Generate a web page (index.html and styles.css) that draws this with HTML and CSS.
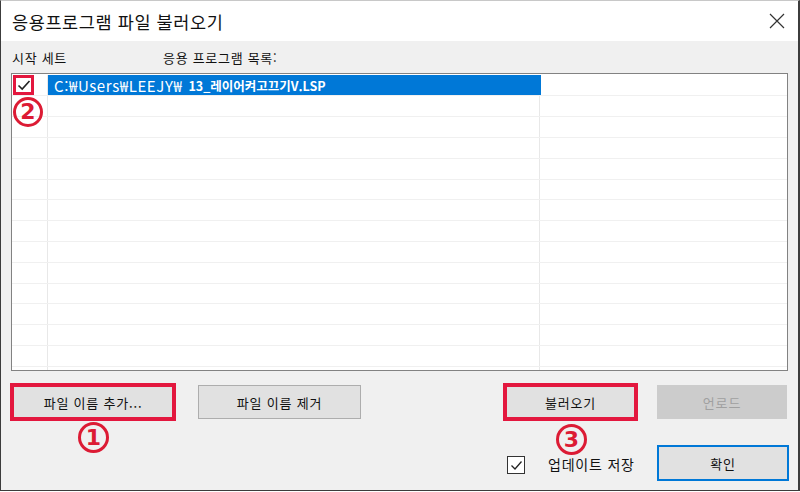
FILE: index.html
```html
<!DOCTYPE html>
<html lang="ko">
<head>
<meta charset="utf-8">
<title>응용프로그램 파일 불러오기</title>
<link rel="stylesheet" href="styles.css">
</head>
<body>
<div class="window">
  <div class="titlebar">
    <span class="title">응용프로그램 파일 불러오기</span>
    <svg class="close" width="16" height="16" viewBox="0 0 16 16"><path d="M1 1 L15 15 M15 1 L1 15" stroke="#333" stroke-width="1.2" fill="none"/></svg>
  </div>
  <div class="content">
    <div class="labels">
      <span class="lab1">시작 세트</span>
      <span class="lab2">응용 프로그램 목록:</span>
    </div>
    <div class="list">
      <div class="row">
        <div class="c1"><span class="chk marked"><svg width="14" height="14" viewBox="0 0 14 14"><path d="M1.5 7.5 L5.2 11 L12.5 3" stroke="#222" stroke-width="1.6" fill="none"/></svg></span></div>
        <div class="c2 sel"><span class="path">C:₩Users₩LEEJY₩</span><span class="fname">13_레이어켜고끄기V.LSP</span></div>
        <div class="c3"></div>
      </div>
      <div class="row"><div class="c1"></div><div class="c2"></div><div class="c3"></div></div>
      <div class="row"><div class="c1"></div><div class="c2"></div><div class="c3"></div></div>
      <div class="row"><div class="c1"></div><div class="c2"></div><div class="c3"></div></div>
      <div class="row"><div class="c1"></div><div class="c2"></div><div class="c3"></div></div>
      <div class="row"><div class="c1"></div><div class="c2"></div><div class="c3"></div></div>
      <div class="row"><div class="c1"></div><div class="c2"></div><div class="c3"></div></div>
      <div class="row"><div class="c1"></div><div class="c2"></div><div class="c3"></div></div>
      <div class="row"><div class="c1"></div><div class="c2"></div><div class="c3"></div></div>
      <div class="row"><div class="c1"></div><div class="c2"></div><div class="c3"></div></div>
      <div class="row"><div class="c1"></div><div class="c2"></div><div class="c3"></div></div>
      <div class="row"><div class="c1"></div><div class="c2"></div><div class="c3"></div></div>
      <div class="row"><div class="c1"></div><div class="c2"></div><div class="c3"></div></div>
      <div class="row"><div class="c1"></div><div class="c2"></div><div class="c3"></div></div>
      <div class="row last"><div class="c1"></div><div class="c2"></div><div class="c3"></div></div>
    </div>
    <div class="btnrow">
      <button class="btn marked b-add">파일 이름 추가...</button>
      <button class="btn b-remove">파일 이름 제거</button>
      <button class="btn marked b-load">불러오기</button>
      <button class="btn disabled b-unload">언로드</button>
    </div>
    <div class="bottomrow">
      <span class="chk2"><svg width="15" height="15" viewBox="0 0 15 15"><path d="M2.5 7.5 L6 11 L12.5 3.5" stroke="#222" stroke-width="1.3" fill="none"/></svg></span>
      <span class="chklabel">업데이트 저장</span>
      <button class="btn default b-ok">확인</button>
    </div>
  </div>
  <span class="num n2">2</span>
  <span class="num n1">1</span>
  <span class="num n3">3</span>
</div>
</body>
</html>
```
FILE: styles.css
```css
html, body {
  margin: 0;
  padding: 0;
  background: #ffffff;
}
body {
  font-family: "Noto Sans CJK KR", "Noto Sans", sans-serif;
  color: #000;
}
.window {
  position: relative;
  width: 800px;
  height: 491px;
  box-sizing: border-box;
  border-left: 1px solid #3c3c3c;
  border-right: 2px solid #3c3c3c;
  border-bottom: 1px solid #3c3c3c;
  border-top: 1px solid #c8c8c8;
  display: flex;
  flex-direction: column;
  overflow: hidden;
}
.titlebar {
  height: 40px;
  flex: none;
  background: #ffffff;
  display: flex;
  align-items: center;
  justify-content: space-between;
  padding: 0 13px 0 11px;
}
.title {
  font-size: 17.5px;
  letter-spacing: 0.6px;
  color: #111;
}
.content {
  flex: 1;
  background: #f0f0f0;
  padding: 0 10px 0 10px;
  display: flex;
  flex-direction: column;
}
.labels {
  height: 32px;
  flex: none;
  display: flex;
  align-items: center;
  font-size: 13px;
  letter-spacing: 0.7px;
  color: #111;
  padding-top: 1px;
  box-sizing: border-box;
}
.lab1 {
  margin-left: 1px;
  width: 151px;
}
.list {
  height: 298px;
  flex: none;
  box-sizing: border-box;
  border: 1px solid #828282;
  background: #ffffff;
  padding-top: 1px;
  overflow: hidden;
}
.row {
  display: flex;
  height: 20.8px;
  box-sizing: border-box;
  border-bottom: 1px solid #f0f0f0;
}
.row:first-child {
  height: 21.4px;
}
.c1 {
  width: 35px;
  flex: none;
  border-right: 1px solid #e8e8e8;
  position: relative;
}
.c2 {
  width: 492px;
  flex: none;
  border-right: 1px solid #e8e8e8;
  box-sizing: border-box;
  display: flex;
  align-items: center;
  white-space: nowrap;
}
.c3 {
  flex: 1;
}
.sel {
  background: #0078d7;
  color: #ffffff;
  padding-left: 6px;
  border-right-color: #0078d7;
  width: 493px;
}
.path {
  font-size: 15px;
  letter-spacing: 0.6px;
}
.fname {
  font-size: 12.5px;
  font-weight: bold;
  margin-left: 6px;
}
.chk.marked {
  position: absolute;
  left: 1px;
  top: 0px;
  width: 21px;
  height: 20px;
  box-sizing: border-box;
  border: 3px solid #e3173e;
  background: #ffffff;
  display: flex;
  align-items: center;
  justify-content: center;
}
.btnrow {
  margin-top: 12px;
  height: 38px;
  flex: none;
  display: flex;
  align-items: center;
}
.btn {
  font-family: "Noto Sans CJK KR", "Noto Sans", sans-serif;
  font-size: 13px;
  letter-spacing: 0.8px;
  color: #111;
  background: #e1e1e1;
  border: 1px solid #adadad;
  box-sizing: border-box;
  padding: 0;
  height: 34px;
}
.btn.marked {
  border: 4px solid #e3173e;
  height: 38px;
}
.b-add {
  width: 166px;
  margin-left: -1px;
}
.b-remove {
  width: 163px;
  margin-left: 22px;
}
.b-load {
  width: 135px;
  margin-left: 142px;
}
.b-unload {
  width: 130px;
  margin-left: 19px;
}
.btn.disabled {
  background: #cccccc;
  border-color: #cccccc;
  color: #a0a0a0;
}
.bottomrow {
  margin-top: 24px;
  height: 36px;
  flex: none;
  display: flex;
  align-items: center;
}
.chk2 {
  margin-left: 496px;
  margin-top: 4px;
  width: 18px;
  height: 18px;
  box-sizing: border-box;
  border: 1px solid #333;
  background: #ffffff;
  display: flex;
  align-items: center;
  justify-content: center;
}
.chklabel {
  margin-left: 23px;
  font-size: 14px;
  letter-spacing: 0.8px;
  color: #111;
  margin-top: 1px;
}
.b-ok {
  margin-left: auto;
  margin-right: -1px;
  width: 132px;
  height: 36px;
  border: 2px solid #0078d7;
}
.num {
  position: absolute;
  width: 30px;
  height: 30px;
  box-sizing: border-box;
  border: 3px solid #dc1b34;
  border-radius: 50%;
  color: #dc1b34;
  font-family: "DejaVu Sans", sans-serif;
  font-weight: bold;
  font-size: 22px;
  line-height: 24px;
  text-align: center;
}
.n2 {
  left: 12px;
  top: 96px;
}
.n1 {
  left: 77px;
  top: 421px;
  width: 31px;
  height: 31px;
  line-height: 25px;
}
.n3 {
  left: 555px;
  top: 423px;
  width: 31px;
  height: 31px;
  line-height: 25px;
}
```
